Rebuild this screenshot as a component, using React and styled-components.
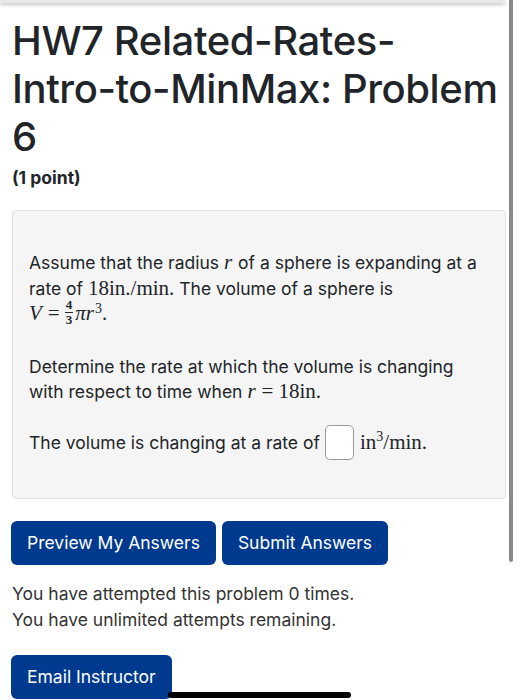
import React from 'react';
import styled, { createGlobalStyle } from 'styled-components';

const GlobalStyle = createGlobalStyle`
  html, body {
    margin: 0;
    padding: 0;
    background: #ffffff;
  }
  body {
    font-family: Inter, "Noto Sans", "Liberation Sans", sans-serif;
    color: #212529;
    overflow: hidden;
  }
`;

const Screen = styled.div`
  position: relative;
  width: 518px;
  height: 700px;
  overflow: hidden;
  background: #fff;
`;

const TopEdge = styled.div`
  height: 3px;
  width: 505px;
  background: #e9e9e9;
  box-shadow: 0 1px 4px rgba(0, 0, 0, 0.35);
`;

const ScrollBar = styled.div`
  position: absolute;
  top: 0;
  left: 509px;
  width: 4px;
  height: 562px;
  background: #8a8a8a;
  border-radius: 0 0 2px 2px;
`;

const HomeIndicator = styled.div`
  position: absolute;
  left: 168px;
  top: 692px;
  width: 183px;
  height: 6px;
  border-radius: 3px;
  background: #000;
`;

const Content = styled.main`
  width: 494px;
  padding: 14px 0 0 12px;
`;

const Title = styled.h1`
  margin: 0;
  font-size: 40px;
  line-height: 48px;
  font-weight: 500;
  color: #212529;
  letter-spacing: -0.4px;
  white-space: nowrap;
`;

const Points = styled.div`
  margin-top: 6px;
  font-size: 17.5px;
  font-weight: 700;
  color: #212529;
`;

const Card = styled.section`
  margin-top: 22px;
  background: #f5f5f5;
  border: 1px solid #e3e3e3;
  border-radius: 4px;
  padding: 39px 16px 42px 16px;
  font-size: 17.5px;
  line-height: 25.5px;
  color: #212529;
`;

const Para = styled.p`
  margin: 0 0 25px 0;
`;

const Math = styled.span`
  font-family: "Liberation Serif", "DejaVu Serif", serif;
  font-size: 21px;
  line-height: 1;
`;

const Eq = styled(Math)`
  margin: 0 5px;
`;

const Var = styled.i`
  font-family: "Liberation Serif", "DejaVu Serif", serif;
  font-style: italic;
  font-size: 21px;
  line-height: 1;
  padding-right: 1px;
`;

const Frac = styled.span`
  display: inline-flex;
  flex-direction: column;
  align-items: center;
  vertical-align: middle;
  position: relative;
  top: -3px;
  margin-right: 2px;
  font-family: "Liberation Serif", serif;
  font-size: 13px;
  line-height: 12px;
  font-weight: 700;
`;

const FracNum = styled.span`
  border-bottom: 1px solid #212529;
  padding: 0 1px 1px;
`;

const FracDen = styled.span`
  padding-top: 1px;
`;

const Sup = styled.sup`
  font-family: "Liberation Serif", serif;
  font-size: 14px;
  line-height: 0;
`;

const AnswerLine = styled.p`
  margin: 0;
  display: flex;
  align-items: center;
  height: 26px;
`;

const AnswerBox = styled.input`
  width: 29px;
  height: 35px;
  box-sizing: border-box;
  margin: 0 6px 0 5px;
  border: 1px solid #9a9a9a;
  border-radius: 5px;
  background: #fff;
  padding: 0;
  flex-shrink: 0;
`;

const ButtonRow = styled.div`
  display: flex;
  gap: 6px;
  margin-top: 22px;
  margin-left: -1px;
`;

const Button = styled.button`
  height: 44px;
  padding: 0 16px;
  background: #003a8f;
  color: #fff;
  border: none;
  border-radius: 6px;
  font-family: Inter, "Noto Sans", "Liberation Sans", sans-serif;
  font-size: 17.5px;
  cursor: pointer;
`;

const Attempts = styled.div`
  margin-top: 16px;
  font-size: 17.5px;
  line-height: 26px;
  color: #333;
`;

const EmailRow = styled.div`
  margin-top: 22px;
  margin-left: -1px;
`;

export default function App() {
  return (
    <Screen>
      <GlobalStyle />
      <TopEdge />
      <Content>
        <Title>
          HW7 Related-Rates-
          <br />
          Intro-to-MinMax: Problem
          <br />6
        </Title>
        <Points>(1 point)</Points>
        <Card>
          <Para>
            Assume that the radius <Var>r</Var> of a sphere is expanding at a rate of{' '}
            <Math>18in./min.</Math> The volume of a sphere is
            <br />
            <Var>V</Var>
            <Eq>=</Eq>
            <Frac>
              <FracNum>4</FracNum>
              <FracDen>3</FracDen>
            </Frac>
            <Var>πr</Var>
            <Sup>3</Sup>
            <Math>.</Math>
          </Para>
          <Para>
            Determine the rate at which the volume is changing with respect to time when{' '}
            <Var>r</Var>
            <Eq>=</Eq>
            <Math>18in.</Math>
          </Para>
          <AnswerLine>
            The volume is changing at a rate of
            <AnswerBox type="text" aria-label="answer" />
            <Math>
              in<Sup>3</Sup>/min.
            </Math>
          </AnswerLine>
        </Card>
        <ButtonRow>
          <Button>Preview My Answers</Button>
          <Button>Submit Answers</Button>
        </ButtonRow>
        <Attempts>
          You have attempted this problem 0 times.
          <br />
          You have unlimited attempts remaining.
        </Attempts>
        <EmailRow>
          <Button>Email Instructor</Button>
        </EmailRow>
      </Content>
      <ScrollBar />
      <HomeIndicator />
    </Screen>
  );
}
